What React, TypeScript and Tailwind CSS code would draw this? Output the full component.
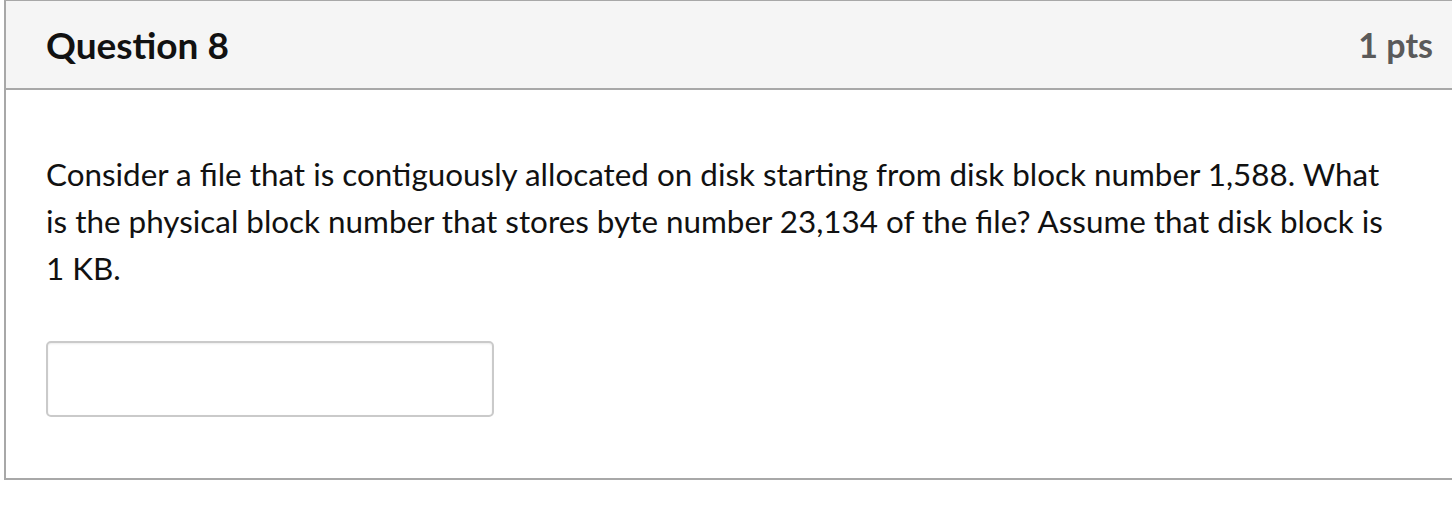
export default function App() {
  return (
    <div
      className="w-screen h-[512px] overflow-hidden bg-white pl-[4px]"
      style={{ fontFamily: "Lato, 'Noto Sans', sans-serif" }}
    >
      <div className="w-[1470px] border-2 border-t border-[#a8a8a8] bg-white">
        <div className="flex h-[89px] items-center justify-between border-b-2 border-[#a8a8a8] bg-[#f5f5f5] pl-[40px] pr-[39px]">
          <h2 className="text-[37px] font-bold text-[#111]">Question 8</h2>
          <span className="text-[34px] font-bold text-[#5a5a5a]">1 pts</span>
        </div>
        <div className="pl-[40px] pt-[61px] pb-[61px]">
          <p className="w-[1346px] text-[31.4px] leading-[47px] text-[#111]">
            Consider a file that is contiguously allocated on disk starting from disk block number 1,588. What is the
            physical block number that stores byte number 23,134 of the file? Assume that disk block is 1 KB.
          </p>
          <input
            type="text"
            className="mt-[49px] block h-[76px] w-[448px] rounded-[5px] border-2 border-[#cacaca] bg-white shadow-[inset_0_1px_2px_rgba(0,0,0,0.08)] outline-none"
          />
        </div>
      </div>
    </div>
  );
}
